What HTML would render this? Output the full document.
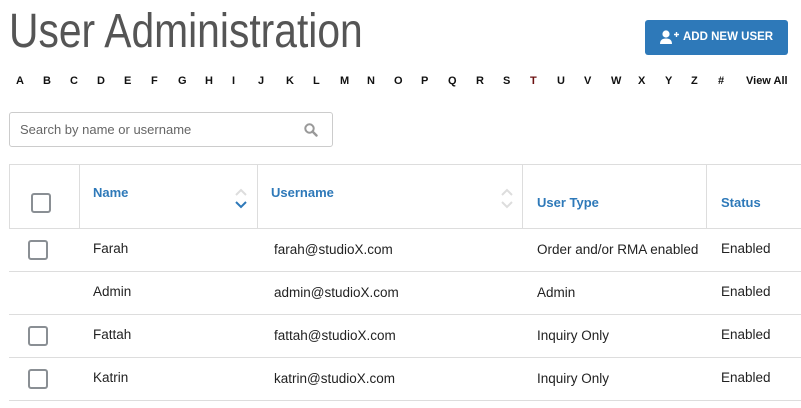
<!DOCTYPE html>
<html><head><style>
body{margin:0;width:801px;height:408px;background:#fff;font-family:"Liberation Sans",Arial,sans-serif;position:relative;overflow:hidden;color:#222}
.t{position:absolute;left:9px;top:4px;font-size:48px;font-weight:300;color:#555;white-space:nowrap;transform:scaleX(0.85);transform-origin:0 0}
.btn{position:absolute;left:645px;top:20px;width:143px;height:35px;background:#2e79b9;border-radius:3px;color:#fff;font-size:11.5px;font-weight:bold;line-height:35px}
.btn span{position:absolute;left:38px}
.al{position:absolute;top:75px;font-size:11px;font-weight:bold;color:#111}
.s{position:absolute;left:9px;top:112px;width:322px;height:33px;border:1px solid #ccc;border-radius:3px}
.s span{position:absolute;left:10px;top:9px;font-size:13px;color:#666}
.h{position:absolute;background:#ddd}
.hd{position:absolute;font-size:13px;font-weight:bold;color:#2e79b9}
.cb{position:absolute;width:16px;height:16px;border:2px solid #8a8f94;border-radius:3px}
.c{position:absolute;font-size:13.5px;color:#222}
</style></head><body>
<div class="t">User Administration</div>
<div class="btn"><svg style="position:absolute;left:15px;top:10px" width="20" height="15" viewBox="0 0 20 15"><circle cx="6" cy="4" r="3.6" fill="#fff"/><path d="M0 14 Q0 8.5 6 8.5 Q12 8.5 12 14Z" fill="#fff"/><path d="M14 4.5h5M16.5 2v5" stroke="#fff" stroke-width="1.4"/></svg><span>ADD NEW USER</span></div>
<div class="al" style="left:16px">A</div><div class="al" style="left:43px">B</div><div class="al" style="left:70px">C</div><div class="al" style="left:97px">D</div><div class="al" style="left:124px">E</div><div class="al" style="left:151px">F</div><div class="al" style="left:178px">G</div><div class="al" style="left:205px">H</div><div class="al" style="left:232px">I</div><div class="al" style="left:258px">J</div><div class="al" style="left:286px">K</div><div class="al" style="left:313px">L</div><div class="al" style="left:340px">M</div><div class="al" style="left:367px">N</div><div class="al" style="left:394px">O</div><div class="al" style="left:421px">P</div><div class="al" style="left:448px">Q</div><div class="al" style="left:476px">R</div><div class="al" style="left:503px">S</div><div class="al" style="left:530px;color:#6b1010">T</div><div class="al" style="left:557px">U</div><div class="al" style="left:584px">V</div><div class="al" style="left:611px">W</div><div class="al" style="left:638px">X</div><div class="al" style="left:665px">Y</div><div class="al" style="left:691px">Z</div><div class="al" style="left:718px">#</div><div class="al" style="left:746px">View All</div>
<div class="s"><span>Search by name or username</span><svg style="position:absolute;left:294px;top:10px" width="14" height="14" viewBox="0 0 14 14"><circle cx="5.5" cy="5.5" r="4.2" fill="none" stroke="#999" stroke-width="2"/><path d="M8.5 8.5L12.5 12.5" stroke="#999" stroke-width="2.4" stroke-linecap="round"/></svg></div>
<div class="h" style="left:9px;top:164px;width:792px;height:1px"></div>
<div class="h" style="left:9px;top:164px;width:1px;height:64px"></div>
<div class="h" style="left:79px;top:164px;width:1px;height:64px"></div>
<div class="h" style="left:257px;top:164px;width:1px;height:64px"></div>
<div class="h" style="left:522px;top:164px;width:1px;height:64px"></div>
<div class="h" style="left:706px;top:164px;width:1px;height:64px"></div>
<div class="h" style="left:9px;top:228px;width:792px;height:1px"></div>
<div class="h" style="left:9px;top:271px;width:792px;height:1px"></div>
<div class="h" style="left:9px;top:314px;width:792px;height:1px"></div>
<div class="h" style="left:9px;top:357px;width:792px;height:1px"></div>
<div class="h" style="left:9px;top:400px;width:792px;height:1px"></div>
<div class="cb" style="left:31px;top:193px"></div>
<div class="hd" style="left:93px;top:185px">Name</div>
<div class="hd" style="left:271px;top:185px">Username</div>
<div class="hd" style="left:537px;top:195px">User Type</div>
<div class="hd" style="left:721px;top:195px">Status</div>
<svg style="position:absolute;left:234px;top:188px" width="14" height="22" viewBox="0 0 14 22"><path d="M2 7L7 2L12 7" fill="none" stroke="#ddd" stroke-width="2"/><path d="M2 14L7 19L12 14" fill="none" stroke="#2e79b9" stroke-width="2"/></svg>
<svg style="position:absolute;left:500px;top:188px" width="14" height="22" viewBox="0 0 14 22"><path d="M2 7L7 2L12 7" fill="none" stroke="#ddd" stroke-width="2"/><path d="M2 14L7 19L12 14" fill="none" stroke="#ddd" stroke-width="2"/></svg>
<div class="cb" style="left:28px;top:240px"></div>
<div class="c" style="left:93px;top:241px">Farah</div><div class="c" style="left:274px;top:242px">farah@studioX.com</div><div class="c" style="left:537px;top:242px">Order and/or RMA enabled</div><div class="c" style="left:721px;top:241px">Enabled</div>
<div class="c" style="left:93px;top:284px">Admin</div><div class="c" style="left:274px;top:285px">admin@studioX.com</div><div class="c" style="left:537px;top:285px">Admin</div><div class="c" style="left:721px;top:284px">Enabled</div>
<div class="cb" style="left:28px;top:326px"></div>
<div class="c" style="left:93px;top:327px">Fattah</div><div class="c" style="left:274px;top:328px">fattah@studioX.com</div><div class="c" style="left:537px;top:328px">Inquiry Only</div><div class="c" style="left:721px;top:327px">Enabled</div>
<div class="cb" style="left:28px;top:369px"></div>
<div class="c" style="left:93px;top:370px">Katrin</div><div class="c" style="left:274px;top:371px">katrin@studioX.com</div><div class="c" style="left:537px;top:371px">Inquiry Only</div><div class="c" style="left:721px;top:370px">Enabled</div>
</body></html>
